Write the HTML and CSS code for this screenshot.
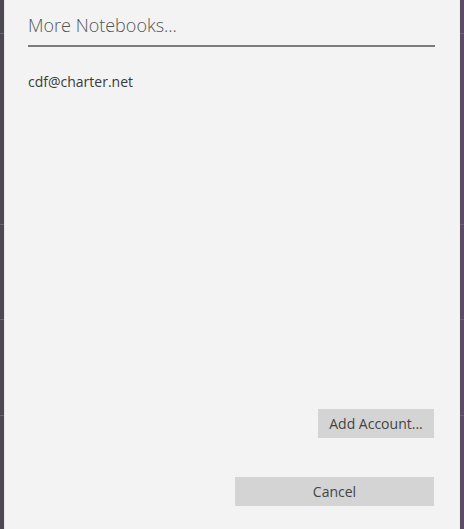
FILE: index.html
```html
<!DOCTYPE html>
<html lang="en">
<head>
  <meta charset="UTF-8" />
  <meta name="viewport" content="width=device-width, initial-scale=1" />
  <title>More Notebooks</title>
  <link rel="stylesheet" href="styles.css">
</head>

<body>
  <div class="frame">
    <div class="side side-left"></div>

    <!-- 노트북 열기 패널 -->
    <div class="panel">
      <h1 class="panel-title">More Notebooks...</h1>

      <ul class="account-list">
        <li>cdf@charter.net</li>
      </ul>

      <div class="panel-actions">
        <button class="btn btn-add">Add Account...</button>
        <button class="btn btn-cancel">Cancel</button>
      </div>
    </div>

    <div class="side side-right"></div>
  </div>
</body>
</html>
```

FILE: styles.css
```css
* {
  box-sizing: border-box;
}

body {
  margin: 0;
  font-family: 'Open Sans', 'Noto Sans', sans-serif;
  color: #333;
  background: #4b4850;
}

.frame {
  display: flex;
  height: 529px;
}

/* 양쪽 어두운 배경 */
.side {
  width: 5px;
  background-image: repeating-linear-gradient(to bottom,
    transparent 0, transparent 33px, #6a6670 33px, #6a6670 34px, transparent 34px, transparent 95.5px);
}

.side-left {
  background-color: #4b4850;
  border-right: 1px solid #efe2ef;
}

.side-right {
  background-color: #5c4c62;
  border-left: 1px solid #f5ecf3;
}

.panel {
  flex: 1;
  background: #f3f3f3;
  padding: 12px 25px 23px 22px;
  display: flex;
  flex-direction: column;
}

.panel-title {
  margin: 0 -1px 0 1px;
  font-size: 18px;
  font-weight: 300;
  color: #555;
  line-height: 26px;
  padding-bottom: 7px;
  border-bottom: 2px solid #7b7b7b;
}

.account-list {
  list-style: none;
  margin: 25px 0 0;
  padding: 0 0 0 1px;
}

.account-list li {
  font-size: 14px;
  line-height: 20px;
  color: #3a3a3a;
}

.panel-actions {
  margin-top: auto;
  display: flex;
  flex-direction: column;
  align-items: flex-end;
  gap: 39px;
}

.btn {
  border: none;
  border-radius: 0;
  background: #d4d4d4;
  color: #444;
  font-family: inherit;
  font-size: 14px;
  height: 29px;
  padding: 0 11px;
  cursor: pointer;
}

.btn-add {
  width: 116px;
}

.btn-cancel {
  width: 199px;
}
```
